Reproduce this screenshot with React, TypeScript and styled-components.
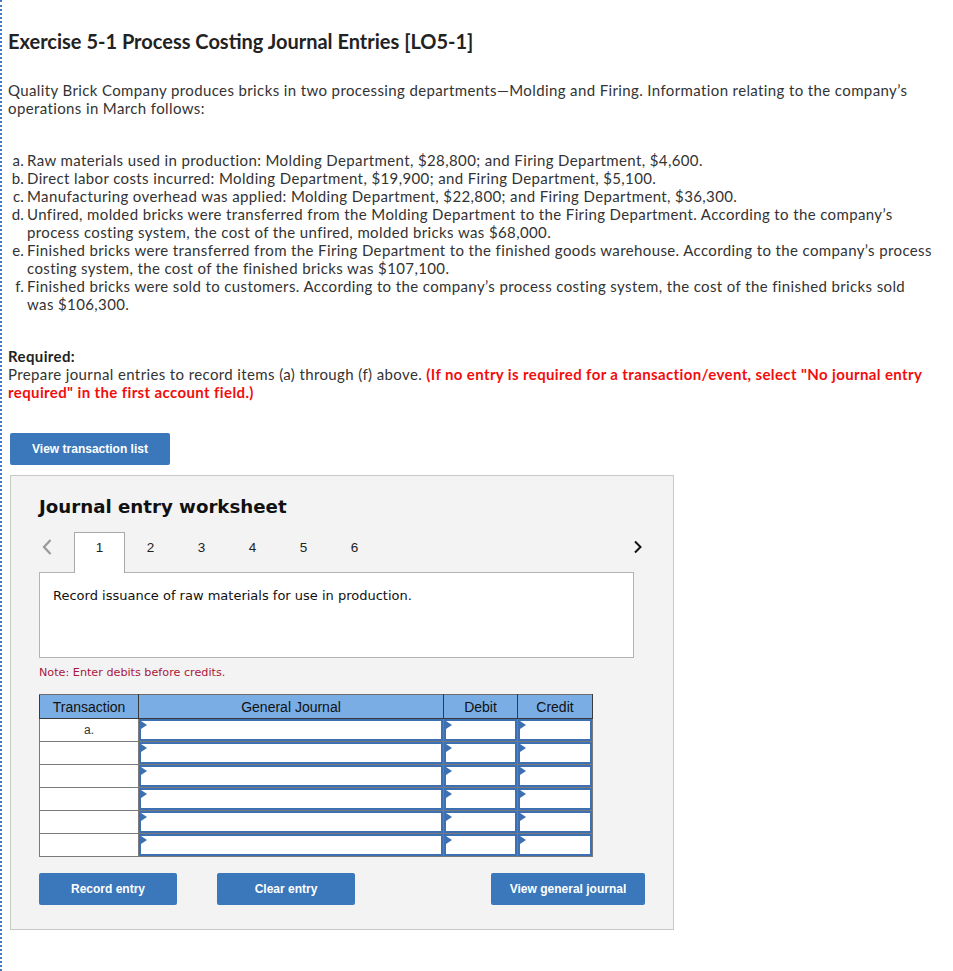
import * as React from "react";
import styled, { createGlobalStyle } from "styled-components";

const GlobalStyle = createGlobalStyle`
  html, body {
    margin: 0;
    padding: 0;
    background: #ffffff;
  }
  body {
    font-family: "Lato", "Open Sans", sans-serif;
    color: #333333;
  }
`;

const Page = styled.div`
  min-height: 971px;
  border-left: 2px dotted #3f78c4;
  padding: 29px 0 40px 6px;
  box-sizing: border-box;
`;

const Title = styled.h1`
  margin: 0;
  font-size: 20px;
  line-height: 24px;
  font-weight: 700;
  color: #222222;
`;

const Paragraph = styled.p`
  margin: 28px 0 0;
  font-size: 15px;
  line-height: 18px;
  letter-spacing: 0.38px;
  max-width: 920px;
`;

const ItemList = styled.div`
  margin-top: 34px;
  display: flex;
  flex-direction: column;
`;

const Item = styled.div`
  display: flex;
  font-size: 15px;
  line-height: 18px;
  letter-spacing: 0.38px;
`;

const Marker = styled.span`
  flex: 0 0 16px;
  text-align: right;
  margin-right: 3px;
  letter-spacing: 0.2px;
`;

const ItemText = styled.span`
  flex: 1;
  max-width: 907px;
`;

const Required = styled.div`
  margin-top: 34px;
  font-size: 15px;
  line-height: 18px;
  letter-spacing: 0.38px;
  max-width: 935px;
`;

const Strong = styled.div`
  font-weight: 700;
  color: #222222;
`;

const Red = styled.span`
  font-weight: 700;
  color: #f20d0d;
`;

const BlueButton = styled.button<{ $width: number }>`
  width: ${(p) => p.$width}px;
  height: 32px;
  border: none;
  border-radius: 2px;
  background: #3b77bb;
  color: #ffffff;
  font-family: "Liberation Sans", Arial, sans-serif;
  font-weight: 700;
  font-size: 12px;
  cursor: pointer;
  padding: 0;
`;

const TopButtonRow = styled.div`
  margin: 32px 0 0 2px;
`;

const Worksheet = styled.section`
  margin: 10px 0 0 2px;
  width: 664px;
  box-sizing: border-box;
  background: #f3f3f3;
  border: 1px solid #c8c8c8;
  padding: 19px 39px 24px 28px;
`;

const WorksheetTitle = styled.h2`
  margin: 0;
  font-family: "DejaVu Sans", Verdana, sans-serif;
  font-size: 18.2px;
  line-height: 24px;
  font-weight: 700;
  color: #111111;
`;

const TabBar = styled.div`
  margin-top: 13px;
  display: flex;
  align-items: flex-start;
  height: 40px;
  position: relative;
  z-index: 1;
`;

const Arrow = styled.span`
  width: 35px;
  height: 30px;
  display: flex;
  align-items: center;
  justify-content: flex-start;
  padding-left: 2px;
  box-sizing: border-box;
`;

const Tab = styled.div<{ $active?: boolean }>`
  width: 51px;
  height: 41px;
  box-sizing: border-box;
  padding-top: 7px;
  text-align: center;
  font-family: "Liberation Sans", Arial, sans-serif;
  font-size: 13.5px;
  line-height: 16px;
  color: #222222;
  background: ${(p) => (p.$active ? "#ffffff" : "transparent")};
  border: 1px solid ${(p) => (p.$active ? "#a9a9a9" : "transparent")};
  border-bottom: none;
`;

const TabSpacer = styled.div`
  flex: 1;
`;

const NextArrow = styled.span`
  width: 20px;
  height: 30px;
  display: flex;
  align-items: center;
  margin-right: -19px;
`;

const Prompt = styled.div`
  width: 595px;
  height: 86px;
  box-sizing: border-box;
  background: #ffffff;
  border: 1px solid #b3b3b3;
  padding: 15px 13px;
  font-family: "DejaVu Sans", Verdana, sans-serif;
  font-size: 13px;
  line-height: 16px;
  color: #111111;
`;

const Note = styled.div`
  margin-top: 8px;
  font-family: "DejaVu Sans", Verdana, sans-serif;
  font-size: 11.2px;
  line-height: 14px;
  color: #a8173b;
`;

const Table = styled.table`
  margin-top: 14px;
  border-collapse: collapse;
  width: 553px;
  table-layout: fixed;
  border: 1px solid #6e6e6e;
`;

const HeadCell = styled.th`
  height: 23px;
  padding: 0;
  background: #7aade4;
  border: 1px solid #3a3a3a;
  border-top-color: #6e6e6e;
  font-family: "Liberation Sans", Arial, sans-serif;
  font-size: 14px;
  font-weight: 400;
  color: #111111;
`;

const TxCell = styled.td`
  height: 22px;
  padding: 0;
  background: #ffffff;
  border: 1px solid #7a7a7a;
  text-align: center;
  font-family: "Liberation Sans", Arial, sans-serif;
  font-size: 12px;
  color: #333333;
  vertical-align: middle;
`;

const InputCell = styled.td`
  height: 22px;
  padding: 0;
  border: 1px solid #7a7a7a;
  background: #ffffff;
`;

const Field = styled.div`
  position: relative;
  height: 22px;
  box-sizing: border-box;
  border: 2px solid #3c70b3;
  background: #ffffff;
`;

const Flag = styled.span`
  position: absolute;
  top: 0;
  left: 0;
  width: 0;
  height: 0;
  border-top: 4px solid transparent;
  border-bottom: 4px solid transparent;
  border-left: 6px solid #3c70b3;
`;

const ActionRow = styled.div`
  margin-top: 16px;
  display: flex;
  align-items: center;
  gap: 40px;
`;

const PushRight = styled.div`
  margin-left: auto;
  margin-right: -11px;
`;

const LeftChevron = () => (
  <svg width="12" height="18" viewBox="0 0 12 18">
    <path d="M9.5 2 L3 9 L9.5 16" fill="none" stroke="#999999" strokeWidth="2.2" />
  </svg>
);

const RightChevron = () => (
  <svg width="10" height="14" viewBox="0 0 10 14">
    <path d="M2 1.5 L7.5 7 L2 12.5" fill="none" stroke="#111111" strokeWidth="2" />
  </svg>
);

const items: [string, string][] = [
  ["a.", "Raw materials used in production: Molding Department, $28,800; and Firing Department, $4,600."],
  ["b.", "Direct labor costs incurred: Molding Department, $19,900; and Firing Department, $5,100."],
  ["c.", "Manufacturing overhead was applied: Molding Department, $22,800; and Firing Department, $36,300."],
  [
    "d.",
    "Unfired, molded bricks were transferred from the Molding Department to the Firing Department. According to the company\u2019s process costing system, the cost of the unfired, molded bricks was $68,000.",
  ],
  [
    "e.",
    "Finished bricks were transferred from the Firing Department to the finished goods warehouse. According to the company\u2019s process costing system, the cost of the finished bricks was $107,100.",
  ],
  [
    "f.",
    "Finished bricks were sold to customers. According to the company\u2019s process costing system, the cost of the finished bricks sold was $106,300.",
  ],
];

const rows = ["a.", "", "", "", "", ""];

export default function App() {
  return (
    <>
      <GlobalStyle />
      <Page>
        <Title>Exercise 5-1 Process Costing Journal Entries [LO5-1]</Title>
        <Paragraph>
          Quality Brick Company produces bricks in two processing departments—Molding and Firing. Information
          relating to the company’s operations in March follows:
        </Paragraph>

        <ItemList>
          {items.map(([m, t]) => (
            <Item key={m}>
              <Marker>{m}</Marker>
              <ItemText>{t}</ItemText>
            </Item>
          ))}
        </ItemList>

        <Required>
          <Strong>Required:</Strong>
          Prepare journal entries to record items (a) through (f) above.{" "}
          <Red>
            (If no entry is required for a transaction/event, select "No journal entry required" in the first account
            field.)
          </Red>
        </Required>

        <TopButtonRow>
          <BlueButton $width={160}>View transaction list</BlueButton>
        </TopButtonRow>

        <Worksheet>
          <WorksheetTitle>Journal entry worksheet</WorksheetTitle>

          <TabBar>
            <Arrow>
              <LeftChevron />
            </Arrow>
            {[1, 2, 3, 4, 5, 6].map((n) => (
              <Tab key={n} $active={n === 1}>
                {n}
              </Tab>
            ))}
            <TabSpacer />
            <NextArrow>
              <RightChevron />
            </NextArrow>
          </TabBar>

          <Prompt>Record issuance of raw materials for use in production.</Prompt>

          <Note>Note: Enter debits before credits.</Note>

          <Table>
            <colgroup>
              <col style={{ width: 99 }} />
              <col style={{ width: 305 }} />
              <col style={{ width: 74 }} />
              <col style={{ width: 75 }} />
            </colgroup>
            <thead>
              <tr>
                <HeadCell>Transaction</HeadCell>
                <HeadCell>General Journal</HeadCell>
                <HeadCell>Debit</HeadCell>
                <HeadCell>Credit</HeadCell>
              </tr>
            </thead>
            <tbody>
              {rows.map((r, i) => (
                <tr key={i}>
                  <TxCell>{r}</TxCell>
                  {[0, 1, 2].map((c) => (
                    <InputCell key={c}>
                      <Field>
                        <Flag />
                      </Field>
                    </InputCell>
                  ))}
                </tr>
              ))}
            </tbody>
          </Table>

          <ActionRow>
            <BlueButton $width={138}>Record entry</BlueButton>
            <BlueButton $width={138}>Clear entry</BlueButton>
            <PushRight>
              <BlueButton $width={154}>View general journal</BlueButton>
            </PushRight>
          </ActionRow>
        </Worksheet>
      </Page>
    </>
  );
}
